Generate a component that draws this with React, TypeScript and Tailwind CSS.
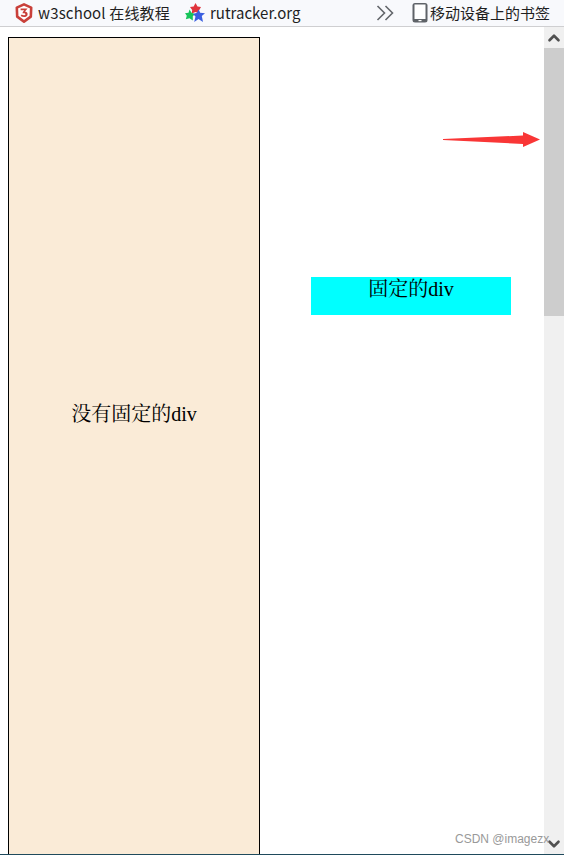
import { ChevronUp, ChevronDown } from 'lucide-react'

const uiFont = { fontFamily: '"Noto Sans CJK SC", "Noto Sans", sans-serif' }
const pageFont = { fontFamily: '"Liberation Serif", "Noto Serif CJK SC", "Noto Sans CJK SC", serif' }

function SchoolLogo() {
  return (
    <svg width="18" height="20" viewBox="0 0 18 20" className="shrink-0">
      <path d="M9 1.4 L16.2 4.6 L15.8 13.6 L9 18.6 L2.2 13.6 L1.8 4.6 Z" fill="#fff" stroke="#c9403a" strokeWidth="2.6" strokeLinejoin="round" />
      <path d="M5.6 5.6 H12.6 L10 8.6 C12.2 8.8 13 10.4 12.5 12 C11.8 14.2 8.4 14.8 5.6 13 L6.6 11.6 C8.2 12.6 10.2 12.5 10.4 11.5 C10.6 10.6 9.4 10.2 7.8 10.4 L7.6 9.2 L9.2 7.3 H5.6 Z" fill="#c9403a" />
    </svg>
  )
}

function TrackerLogo() {
  return (
    <svg width="20" height="20" viewBox="0 0 20 20" className="shrink-0">
      <path d="M10.5 0 L12.5 3.5 L16 4 L14 7.5 L14.5 10.5 L10.5 9 L6.8 10.5 L7.2 7 L5 4 L8.7 3.5 Z" fill="#e0343c" />
      <path d="M4.5 6.5 L6.5 9.8 L10 11 L7.8 13.2 L7.8 17.5 L4.5 15.2 L0.8 16.2 L1.8 12.8 L0 10.2 L3.5 9.8 Z" fill="#18c45a" />
      <path d="M13.5 6.5 L15.2 9.8 L20 10.3 L16.8 13 L18 19 L13.5 16 L9.2 19 L10.5 13.5 L8 11 L12 9.8 Z" fill="#3b5fe0" />
    </svg>
  )
}

function DoubleChevron() {
  return (
    <svg width="18" height="16" viewBox="0 0 18 16" className="shrink-0">
      <path d="M1.5 1 L8.5 8 L1.5 15 M9.5 1 L16.5 8 L9.5 15" fill="none" stroke="#63666b" strokeWidth="1.6" />
    </svg>
  )
}

function PhoneIcon() {
  return (
    <svg width="16" height="20" viewBox="0 0 16 20" className="shrink-0">
      <rect x="0.5" y="0" width="15" height="19.5" rx="2.5" fill="#5f6368" />
      <rect x="2.5" y="1.5" width="11" height="14.5" fill="#fff" />
      <rect x="6.5" y="17" width="3" height="1.2" fill="#fff" />
    </svg>
  )
}

export default function App() {
  return (
    <div className="w-[564px] h-[855px] overflow-hidden flex flex-col bg-white relative">
      <div className="h-[27px] shrink-0 bg-[#f8f9fc] border-b border-[#cfcfd1] flex items-center text-[15px] text-[#1f1f1f]" style={uiFont}>
        <div className="ml-[15px] flex items-center gap-[5px] w-[170px]">
          <SchoolLogo />
          <span className="whitespace-nowrap tracking-[0.15px]">w3school 在线教程</span>
        </div>
        <div className="flex items-center gap-[5px] w-[191px]">
          <TrackerLogo />
          <span className="whitespace-nowrap">rutracker.org</span>
        </div>
        <DoubleChevron />
        <div className="ml-[18px] flex items-center">
          <PhoneIcon />
          <span className="whitespace-nowrap text-[15px] ml-[2px]">移动设备上的书签</span>
        </div>
      </div>

      <div className="flex flex-1 min-h-0">
        <div className="flex-1 flex items-start pl-2 pt-[10px]">
          <div className="w-[252px] h-[830px] shrink-0 bg-[#faebd7] border border-black flex items-start justify-center pt-[363px] text-[20px] leading-[26px] text-black" style={pageFont}>
            没有固定的div
          </div>
          <div className="w-[200px] h-[38px] shrink-0 ml-[51px] mt-[240px] bg-[#00ffff] text-center text-[20px] leading-[25px] text-black" style={pageFont}>
            固定的div
          </div>
        </div>

        <div className="w-5 shrink-0 bg-[#f0f0f0] flex flex-col">
          <div className="h-[21px] flex items-center justify-center">
            <ChevronUp className="w-[18px] h-[18px] text-[#505050]" strokeWidth={3.5} />
          </div>
          <div className="h-[268px] bg-[#cdcdcd]" />
          <div className="flex-1" />
          <div className="h-[20px] flex items-center justify-center">
            <ChevronDown className="w-[18px] h-[18px] text-[#505050]" strokeWidth={3.5} />
          </div>
        </div>
      </div>

      <div className="h-px shrink-0 bg-[#1f4a5c]" />

      {/* annotation arrow drawn on top of the screenshot */}
      <svg width="100" height="20" viewBox="0 0 100 20" className="absolute left-[442px] top-[130px]">
        <path d="M1 9 L1 10 L81 14 L81 17 L98 9.5 L81 2 L81 5.5 Z" fill="#f93636" />
      </svg>

      {/* watermark */}
      <span className="absolute left-[455px] top-[831px] text-[12px] leading-4 text-[#999999] whitespace-nowrap" style={{ fontFamily: '"Liberation Sans", sans-serif' }}>
        CSDN @imagezx
      </span>
    </div>
  )
}
